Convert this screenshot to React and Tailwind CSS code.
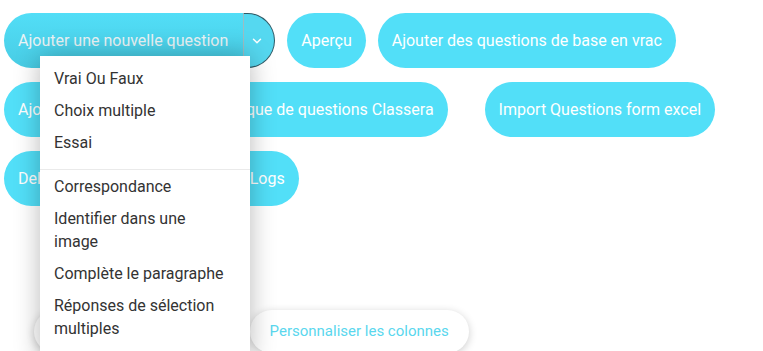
import { ChevronDown } from "lucide-react";

const pill =
  "rounded-full bg-[#52dff8] px-[14px] py-4 text-[16px] leading-[23px] text-white whitespace-nowrap";

const menu = ["Vrai Ou Faux", "Choix multiple", "Essai"];

const menu2 = [
  "Correspondance",
  "Identifier dans une image",
  "Complète le paragraphe",
  "Réponses de sélection multiples",
];

const ghost =
  "rounded-full bg-white px-5 py-[10px] text-[15px] leading-[23px] text-[#5ad7ee] whitespace-nowrap shadow-[0_2px_8px_rgba(0,0,0,0.2)]";

function App() {
  return (
    <div className="h-[351px] w-[763px] overflow-hidden bg-white font-['Roboto',sans-serif]">
      <div className="relative flex flex-col gap-[14px] pl-[4px] pt-[13px]">
        {/* row 1 */}
        <div className="flex items-center gap-3">
          <div className="flex h-[55px]">
            <button className="rounded-l-full bg-gradient-to-b from-[#52def7] to-[#48cce4] pl-[14px] pr-[15px] text-[16px] text-[#eaf3f5] whitespace-nowrap">
              Ajouter une nouvelle question
            </button>
            <button className="flex w-[32px] items-center justify-center rounded-r-full border border-[#2f5a66] border-l-[#9dbcc3] bg-[#55d8f0]">
              <ChevronDown size={14} strokeWidth={2.5} className="-ml-1 text-white" />
            </button>
          </div>
          <button className={pill}>Aperçu</button>
          <button className={pill}>Ajouter des questions de base en vrac</button>
        </div>

        {/* row 2 */}
        <div className="flex items-center">
          <button className={pill}>Ajouter des questions de sa banque de questions Classera</button>
          <button className={pill + " ml-[37px]"}>Import Questions form excel</button>
        </div>

        {/* row 3 */}
        <div className="flex items-center">
          <button className={pill}>Deleted Questions Bank Actions Logs</button>
        </div>

        {/* bottom row */}
        <div className="mt-[90px] flex items-center gap-[11px] pl-[30px]">
          <button className={ghost}>Exporter tout</button>
          <button className={ghost + " ml-[78px]"}>Personnaliser les colonnes</button>
        </div>

        {/* dropdown */}
        <div className="absolute left-[40px] top-[56px] w-[210px] bg-white pt-[6px] pb-4 text-[16px] leading-[23px] text-[#333] shadow-[0_0_24px_rgba(0,0,0,0.28)]">
          {menu.map((m) => (
            <div key={m} className="py-[4.5px] pl-[14px] pr-[22px]">
              {m}
            </div>
          ))}
          <div className="mt-[11px] border-t border-[#eaeaea]" />
          {menu2.map((m) => (
            <div key={m} className="py-[4.5px] pl-[14px] pr-[22px]">
              {m}
            </div>
          ))}
        </div>
      </div>
    </div>
  );
}

export default App;
